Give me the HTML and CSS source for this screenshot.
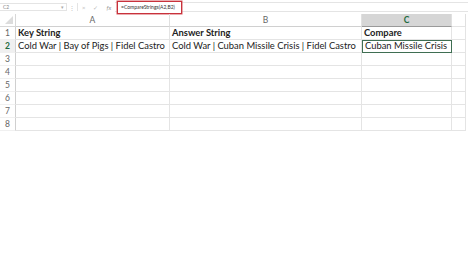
FILE: index.html
```html
<!DOCTYPE html>
<html>
<head>
<meta charset="utf-8">
<link rel="stylesheet" href="styles.css">
</head>
<body>
<div class="fbar">
  <div class="namebox"><span>C2</span><span class="dd">&#9662;</span></div>
  <div class="dots">&#8942;</div>
  <div class="icons"><span>&#215;</span><span>&#10003;</span><span class="fx">fx</span></div>
  <div class="formula"><span class="hl">=CompareStrings(A2,B2)</span></div>
</div>
<div class="grid">
  <div class="corner"><svg width="10" height="10" viewBox="0 0 10 10"><polygon points="9,1 9,9 1,9" fill="#dcdcdc"/></svg></div>
  <div class="ch">A</div>
  <div class="ch">B</div>
  <div class="ch sel">C</div>
  <div class="ch last"></div>

  <div class="rh">1</div>
  <div class="c b">Key String</div>
  <div class="c b">Answer String</div>
  <div class="c b">Compare</div>
  <div class="c last"></div>

  <div class="rh selr">2</div>
  <div class="c">Cold War | Bay of Pigs | Fidel Castro</div>
  <div class="c">Cold War | Cuban Missile Crisis | Fidel Castro</div>
  <div class="c active">Cuban Missile Crisis</div>
  <div class="c last"></div>

  <div class="rh">3</div><div class="c"></div><div class="c"></div><div class="c"></div><div class="c last"></div>
  <div class="rh">4</div><div class="c"></div><div class="c"></div><div class="c"></div><div class="c last"></div>
  <div class="rh">5</div><div class="c"></div><div class="c"></div><div class="c"></div><div class="c last"></div>
  <div class="rh">6</div><div class="c"></div><div class="c"></div><div class="c"></div><div class="c last"></div>
  <div class="rh">7</div><div class="c"></div><div class="c"></div><div class="c"></div><div class="c last"></div>
  <div class="rh">8</div><div class="c"></div><div class="c"></div><div class="c"></div><div class="c last"></div>
</div>
</body>
</html>
```
FILE: styles.css
```css
html, body {
  margin: 0;
  padding: 0;
  background: #fff;
  font-family: "Lato", "Liberation Sans", sans-serif;
  color: #222;
}
.fbar {
  height: 14px;
  display: flex;
  align-items: center;
  font-size: 5px;
  color: #888;
}
.namebox {
  height: 8px;
  border: 1px solid #e4e4e4;
  border-left: none;
  display: flex;
  justify-content: space-between;
  align-items: center;
  padding: 0 2px 0 3px;
  box-sizing: border-box;
  width: 67px;
}
.dd { color: #aaa; font-size: 5px; }
.dots { width: 10px; text-align: center; color: #bbb; font-size: 6px; }
.icons {
  width: 38px;
  display: flex;
  gap: 8px;
  justify-content: flex-start;
  padding-left: 4px;
  color: #bbb;
  font-size: 6px;
  border-left: 1px solid #e4e4e4;
  height: 8px;
  align-items: center;
  box-sizing: border-box;
}
.icons .fx { font-style: italic; color: #999; }
.formula {
  flex: 1;
  height: 10px;
  margin-right: 6px;
  border-top: 1px solid #e4e4e4;
  border-bottom: 1px solid #e4e4e4;
  display: flex;
  align-items: center;
  box-sizing: border-box;
}
.hl {
  display: inline-flex;
  align-items: center;
  height: 13px;
  width: 65px;
  box-sizing: border-box;
  border: 1px solid #c8323c;
  box-shadow: 0 0 0 0.5px #d85a60;
  padding-left: 3px;
  color: #333;
  font-size: 5px;
  margin-left: 2px;
  background: #fff;
}
.grid {
  display: grid;
  grid-template-columns: 16px 154px 192px 90px 14px;
  grid-template-rows: repeat(9, 13px);
  font-size: 9.4px;
}
.corner {
  border-right: 1px solid #d8d8d8;
  border-bottom: 1px solid #d8d8d8;
  display: flex;
  align-items: flex-end;
  justify-content: flex-end;
  box-sizing: border-box;
  padding: 0 1px 1px 0;
}
.ch {
  border-right: 1px solid #e0e0e0;
  border-bottom: 1px solid #d0d0d0;
  box-sizing: border-box;
  text-align: center;
  color: #666;
  font-size: 8.5px;
  line-height: 12px;
}
.ch.sel {
  background: #d6d6d6;
  border-bottom: 1px solid #9a9a9a;
  color: #1e6b41;
  font-weight: 700;
}
.rh {
  border-right: 1px solid #d0d0d0;
  border-bottom: 1px solid #f0f0f0;
  box-sizing: border-box;
  text-align: center;
  color: #666;
  font-size: 8.5px;
  line-height: 12px;
}
.rh.selr { color: #1e6b41; font-weight: 700; background: #f0f0f0; }
.c {
  border-right: 1px solid #e4e4e4;
  border-bottom: 1px solid #e4e4e4;
  box-sizing: border-box;
  padding-left: 2px;
  line-height: 12px;
  white-space: nowrap;
}
.c.b { font-weight: 700; }
.c.active {
  outline: 1.5px solid #3f6e52;
  outline-offset: -1px;
  padding-left: 3px;
}
.ch.last { border-bottom: 1px solid #e4e4e4; }
```
